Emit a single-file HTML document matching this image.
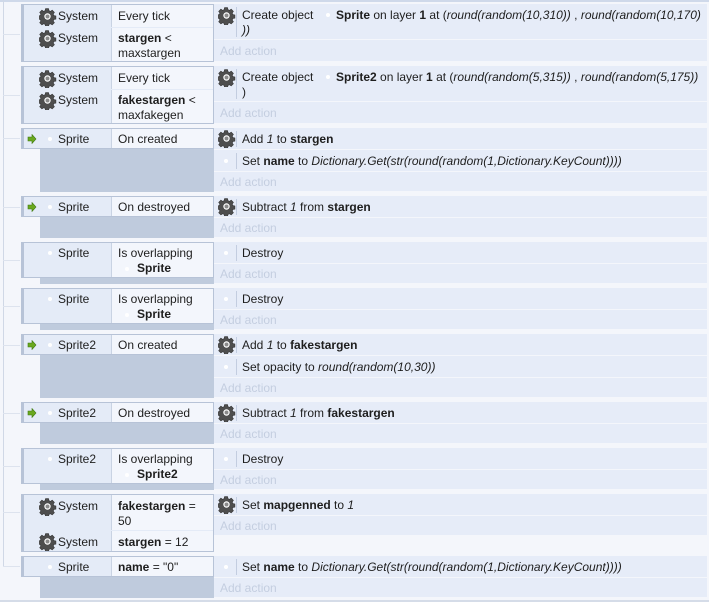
<!DOCTYPE html>
<html><head><meta charset="utf-8"><style>
*{margin:0;padding:0;box-sizing:border-box}
body{width:709px;height:602px;background:#f4f6fb;font-family:"Liberation Sans",sans-serif;font-size:12px;color:#1e1e1e;position:relative;overflow:hidden}
.a{position:absolute}
.cb{position:absolute;left:21px;width:193px;background:#e4ebf7;border:1px solid #b7c3d7;border-left:3px solid #b7c3d7}
.c2{position:absolute;left:87px;right:0;background:#f3f6fc;border-left:1px solid #c9d3e3}
.grey{position:absolute;left:40px;width:174px;background:#bfcbdd}
.ar{position:absolute;left:214px;width:493px;background:#e6ecf8;border-bottom:1px solid #f4f6fb}
.t{position:absolute;white-space:nowrap;line-height:15px}
.add{color:#c4cee0;left:6px;top:4px}
.sep{position:absolute;left:22px;top:3px;width:1px;background:#c3cde0}
.dot{position:absolute;width:4px;height:4px;border-radius:2px;background:#fff}
.tl{position:absolute;left:3px;width:17px;height:1px;background:#dde3ee}
i{font-style:italic}
</style></head><body>
<svg width="0" height="0" style="position:absolute"><defs><g id="g"><path d="M8 0.5l1.6 0.2 0.4 2 1.5 0.7 1.7-1.2 2.2 2.2-1.2 1.7 0.7 1.5 2 0.4 0 3.1-2 0.4-0.7 1.5 1.2 1.7-2.2 2.2-1.7-1.2-1.5 0.7-0.4 2-3.1 0-0.4-2-1.5-0.7-1.7 1.2-2.2-2.2 1.2-1.7-0.7-1.5-2-0.4 0-3.1 2-0.4 0.7-1.5-1.2-1.7 2.2-2.2 1.7 1.2 1.5-0.7 0.4-2z" fill="#4e4e4e" stroke="#333" stroke-width="0.6"/><circle cx="8.5" cy="8.5" r="3.2" fill="#fff"/><circle cx="8.5" cy="8.5" r="2" fill="#8a8a8a"/></g>
<g id="ar"><path d="M1 3h4V0.5L9 5 5 9.5V7H1z" fill="#6aa81e" stroke="#3f7a10" stroke-width="0.6"/></g></defs></svg>

<div class="a" style="left:0;top:0;width:709px;height:2px;background:#cfd9ea"></div>
<div class="a" style="left:3px;top:0;width:1px;height:567px;background:#d0d8e6"></div>
<div class="tl" style="top:34px"></div><div class="tl" style="top:95px"></div><div class="tl" style="top:138px"></div><div class="tl" style="top:207px"></div><div class="tl" style="top:260px"></div><div class="tl" style="top:306px"></div><div class="tl" style="top:345px"></div><div class="tl" style="top:413px"></div><div class="tl" style="top:466px"></div><div class="tl" style="top:512px"></div><div class="tl" style="top:566px"></div>
<div class="a" style="left:0;top:600px;width:709px;height:2px;background:#d5dce8"></div>

<!-- E1 -->
<div class="cb" style="top:4px;height:58px"><div class="c2" style="top:0;height:22px"></div><div class="c2" style="top:23px;height:33px"></div>
<svg class="a" style="left:15px;top:3px" width="18" height="18"><use href="#g"/></svg><div class="t" style="left:34px;top:4px">System</div>
<div class="t" style="left:94px;top:4px">Every tick</div>
<svg class="a" style="left:15px;top:25px" width="18" height="18"><use href="#g"/></svg><div class="t" style="left:34px;top:26px">System</div>
<div class="t" style="left:94px;top:26px"><b>stargen</b> &lt;<br>maxstargen</div></div>
<div class="ar" style="top:4px;height:36px"><svg class="a" style="left:4px;top:3px" width="18" height="18"><use href="#g"/></svg><div class="sep" style="height:30px"></div><div class="t" style="left:28px;top:4px">Create object</div><div class="dot" style="left:112px;top:9px"></div><div class="t" style="left:122px;top:4px"><b>Sprite</b> on layer <b>1</b> at (<i>round(random(10,310))</i> , <i>round(random(10,170)</i></div><div class="t" style="left:28px;top:19px"><i>))</i></div></div>
<div class="ar" style="top:40px;height:22px"><div class="t add">Add action</div></div>

<!-- E2 -->
<div class="cb" style="top:66px;height:58px"><div class="c2" style="top:0;height:22px"></div><div class="c2" style="top:23px;height:33px"></div>
<svg class="a" style="left:15px;top:3px" width="18" height="18"><use href="#g"/></svg><div class="t" style="left:34px;top:4px">System</div>
<div class="t" style="left:94px;top:4px">Every tick</div>
<svg class="a" style="left:15px;top:25px" width="18" height="18"><use href="#g"/></svg><div class="t" style="left:34px;top:26px">System</div>
<div class="t" style="left:94px;top:26px"><b>fakestargen</b> &lt;<br>maxfakegen</div></div>
<div class="ar" style="top:66px;height:36px"><svg class="a" style="left:4px;top:3px" width="18" height="18"><use href="#g"/></svg><div class="sep" style="height:30px"></div><div class="t" style="left:28px;top:4px">Create object</div><div class="dot" style="left:112px;top:9px"></div><div class="t" style="left:122px;top:4px"><b>Sprite2</b> on layer <b>1</b> at (<i>round(random(5,315))</i> , <i>round(random(5,175))</i></div><div class="t" style="left:28px;top:19px">)</div></div>
<div class="ar" style="top:102px;height:22px"><div class="t add">Add action</div></div>

<!-- E3 -->
<div class="grey" style="top:149px;height:43px"></div>
<div class="cb" style="top:128px;height:21px"><div class="c2" style="top:0;height:19px"></div>
<svg class="a" style="left:3px;top:5px" width="10" height="10"><use href="#ar"/></svg><div class="dot" style="left:24px;top:8px"></div><div class="t" style="left:34px;top:3px">Sprite</div><div class="t" style="left:94px;top:3px">On created</div></div>
<div class="ar" style="top:128px;height:22px"><svg class="a" style="left:4px;top:2px" width="18" height="18"><use href="#g"/></svg><div class="sep" style="height:16px"></div><div class="t" style="left:28px;top:4px">Add <i>1</i> to <b>stargen</b></div></div>
<div class="ar" style="top:150px;height:22px"><div class="dot" style="left:10px;top:9px"></div><div class="sep" style="height:16px"></div><div class="t" style="left:28px;top:4px">Set <b>name</b> to <i>Dictionary.Get(str(round(random(1,Dictionary.KeyCount))))</i></div></div>
<div class="ar" style="top:172px;height:20px"><div class="t add" style="top:3px">Add action</div></div>

<!-- E4 -->
<div class="grey" style="top:217px;height:21px"></div>
<div class="cb" style="top:196px;height:21px"><div class="c2" style="top:0;height:19px"></div>
<svg class="a" style="left:3px;top:5px" width="10" height="10"><use href="#ar"/></svg><div class="dot" style="left:24px;top:8px"></div><div class="t" style="left:34px;top:3px">Sprite</div><div class="t" style="left:94px;top:3px">On destroyed</div></div>
<div class="ar" style="top:196px;height:22px"><svg class="a" style="left:4px;top:2px" width="18" height="18"><use href="#g"/></svg><div class="sep" style="height:16px"></div><div class="t" style="left:28px;top:4px">Subtract <i>1</i> from <b>stargen</b></div></div>
<div class="ar" style="top:218px;height:20px"><div class="t add" style="top:3px">Add action</div></div>

<!-- E5 -->
<div class="grey" style="top:278px;height:6px"></div>
<div class="cb" style="top:242px;height:36px"><div class="c2" style="top:0;height:34px"></div>
<div class="dot" style="left:24px;top:8px"></div><div class="t" style="left:34px;top:3px">Sprite</div><div class="t" style="left:94px;top:3px">Is overlapping</div><div class="dot" style="left:101px;top:24px"></div><div class="t" style="left:113px;top:18px"><b>Sprite</b></div></div>
<div class="ar" style="top:242px;height:22px"><div class="dot" style="left:10px;top:9px"></div><div class="sep" style="height:16px"></div><div class="t" style="left:28px;top:4px">Destroy</div></div>
<div class="ar" style="top:264px;height:20px"><div class="t add" style="top:3px">Add action</div></div>

<!-- E6 -->
<div class="grey" style="top:324px;height:6px"></div>
<div class="cb" style="top:288px;height:36px"><div class="c2" style="top:0;height:34px"></div>
<div class="dot" style="left:24px;top:8px"></div><div class="t" style="left:34px;top:3px">Sprite</div><div class="t" style="left:94px;top:3px">Is overlapping</div><div class="dot" style="left:101px;top:24px"></div><div class="t" style="left:113px;top:18px"><b>Sprite</b></div></div>
<div class="ar" style="top:288px;height:22px"><div class="dot" style="left:10px;top:9px"></div><div class="sep" style="height:16px"></div><div class="t" style="left:28px;top:4px">Destroy</div></div>
<div class="ar" style="top:310px;height:20px"><div class="t add" style="top:3px">Add action</div></div>

<!-- E7 -->
<div class="grey" style="top:355px;height:43px"></div>
<div class="cb" style="top:334px;height:21px"><div class="c2" style="top:0;height:19px"></div>
<svg class="a" style="left:3px;top:5px" width="10" height="10"><use href="#ar"/></svg><div class="dot" style="left:24px;top:8px"></div><div class="t" style="left:34px;top:3px">Sprite2</div><div class="t" style="left:94px;top:3px">On created</div></div>
<div class="ar" style="top:334px;height:22px"><svg class="a" style="left:4px;top:2px" width="18" height="18"><use href="#g"/></svg><div class="sep" style="height:16px"></div><div class="t" style="left:28px;top:4px">Add <i>1</i> to <b>fakestargen</b></div></div>
<div class="ar" style="top:356px;height:22px"><div class="dot" style="left:10px;top:9px"></div><div class="sep" style="height:16px"></div><div class="t" style="left:28px;top:4px">Set opacity to <i>round(random(10,30))</i></div></div>
<div class="ar" style="top:378px;height:20px"><div class="t add" style="top:3px">Add action</div></div>

<!-- E8 -->
<div class="grey" style="top:423px;height:21px"></div>
<div class="cb" style="top:402px;height:21px"><div class="c2" style="top:0;height:19px"></div>
<svg class="a" style="left:3px;top:5px" width="10" height="10"><use href="#ar"/></svg><div class="dot" style="left:24px;top:8px"></div><div class="t" style="left:34px;top:3px">Sprite2</div><div class="t" style="left:94px;top:3px">On destroyed</div></div>
<div class="ar" style="top:402px;height:22px"><svg class="a" style="left:4px;top:2px" width="18" height="18"><use href="#g"/></svg><div class="sep" style="height:16px"></div><div class="t" style="left:28px;top:4px">Subtract <i>1</i> from <b>fakestargen</b></div></div>
<div class="ar" style="top:424px;height:20px"><div class="t add" style="top:3px">Add action</div></div>

<!-- E9 -->
<div class="grey" style="top:484px;height:6px"></div>
<div class="cb" style="top:448px;height:36px"><div class="c2" style="top:0;height:34px"></div>
<div class="dot" style="left:24px;top:8px"></div><div class="t" style="left:34px;top:3px">Sprite2</div><div class="t" style="left:94px;top:3px">Is overlapping</div><div class="dot" style="left:101px;top:24px"></div><div class="t" style="left:113px;top:18px"><b>Sprite2</b></div></div>
<div class="ar" style="top:448px;height:22px"><div class="dot" style="left:10px;top:9px"></div><div class="sep" style="height:16px"></div><div class="t" style="left:28px;top:4px">Destroy</div></div>
<div class="ar" style="top:470px;height:20px"><div class="t add" style="top:3px">Add action</div></div>

<!-- E10 -->
<div class="cb" style="top:494px;height:58px"><div class="c2" style="top:0;height:35px"></div><div class="c2" style="top:36px;height:20px"></div>
<svg class="a" style="left:15px;top:3px" width="18" height="18"><use href="#g"/></svg><div class="t" style="left:34px;top:4px">System</div>
<div class="t" style="left:94px;top:4px"><b>fakestargen</b> =<br>50</div>
<svg class="a" style="left:15px;top:38px" width="18" height="18"><use href="#g"/></svg><div class="t" style="left:34px;top:40px">System</div>
<div class="t" style="left:94px;top:40px"><b>stargen</b> = 12</div></div>
<div class="ar" style="top:494px;height:22px"><svg class="a" style="left:4px;top:2px" width="18" height="18"><use href="#g"/></svg><div class="sep" style="height:16px"></div><div class="t" style="left:28px;top:4px">Set <b>mapgenned</b> to <i>1</i></div></div>
<div class="ar" style="top:516px;height:20px"><div class="t add" style="top:3px">Add action</div></div>

<!-- E11 -->
<div class="grey" style="top:577px;height:21px"></div>
<div class="cb" style="top:556px;height:21px"><div class="c2" style="top:0;height:19px"></div>
<div class="dot" style="left:24px;top:8px"></div><div class="t" style="left:34px;top:3px">Sprite</div><div class="t" style="left:94px;top:3px"><b>name</b> = "0"</div></div>
<div class="ar" style="top:556px;height:22px"><div class="dot" style="left:10px;top:9px"></div><div class="sep" style="height:16px"></div><div class="t" style="left:28px;top:4px">Set <b>name</b> to <i>Dictionary.Get(str(round(random(1,Dictionary.KeyCount))))</i></div></div>
<div class="ar" style="top:578px;height:20px"><div class="t add" style="top:3px">Add action</div></div>
</body></html>
